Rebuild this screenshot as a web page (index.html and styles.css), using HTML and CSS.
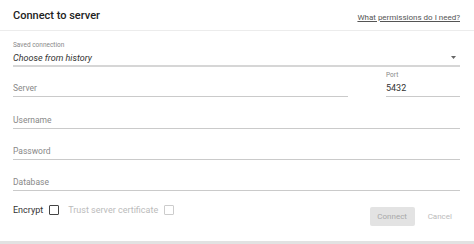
FILE: index.html
```html
<!DOCTYPE html>
<html lang="en">

<head>
    <meta charset="UTF-8">
    <meta name="viewport" content="width=device-width, initial-scale=1.0">
    <title>Connect to server</title>
    <link rel="stylesheet" href="styles.css">
</head>

<body>
    <div class="dialog">
        <div class="header">
            <h1 class="title">Connect to server</h1>
            <a class="help" href="#">What permissions do I need?</a>
        </div>
        <div class="content">
            <div class="select">
                <div class="label">Saved connection</div>
                <div class="value">
                    <span>Choose from history</span>
                    <svg class="arrow" width="5" height="3" viewBox="0 0 5 3"><path d="M0 0h5L2.5 3z" fill="#666"/></svg>
                </div>
            </div>
            <div class="row">
                <div class="field server"><span class="placeholder">Server</span></div>
                <div class="port">
                    <div class="label">Port</div>
                    <div class="field"><span class="text">5432</span></div>
                </div>
            </div>
            <div class="field gap first"><span class="placeholder">Username</span></div>
            <div class="field gap"><span class="placeholder">Password</span></div>
            <div class="field gap"><span class="placeholder">Database</span></div>
            <div class="footer">
                <div class="checks">
                    <span class="check-label">Encrypt</span>
                    <span class="box"></span>
                    <span class="check-label off">Trust server certificate</span>
                    <span class="box off"></span>
                </div>
                <div class="actions">
                    <button class="btn connect" disabled>Connect</button>
                    <button class="btn cancel">Cancel</button>
                </div>
            </div>
        </div>
    </div>
</body>

</html>
```

FILE: styles.css
```css
* {
    margin: 0;
    padding: 0;
    box-sizing: border-box;
    font-family: Roboto, "Liberation Sans", Arial, sans-serif;
}

body {
    background: #fff;
}

.dialog {
    width: 474px;
    height: 244px;
    border-bottom: 3px solid #e2e2e2;
}

.header {
    display: flex;
    align-items: center;
    justify-content: space-between;
    height: 31px;
    padding: 0 14px 0 13px;
    border-bottom: 1px solid #ececec;
}

.title {
    font-size: 11px;
    font-weight: 500;
    color: #222;
    padding-top: 1px;
}

.help {
    font-size: 8px;
    color: #555;
    text-decoration: underline;
    padding-top: 5px;
}

.content {
    padding: 0 14px 0 13px;
}

.select {
    padding-top: 10px;
    border-bottom: 2px solid #d6d6d6;
}

.label {
    font-size: 6.5px;
    line-height: 9px;
    color: #888;
}

.value {
    display: flex;
    align-items: center;
    justify-content: space-between;
    height: 15px;
    font-size: 9px;
    font-style: italic;
    color: #333;
    padding-right: 4px;
}

.row {
    display: flex;
    align-items: flex-end;
    gap: 38px;
    padding-top: 3px;
}

.server {
    flex: 1;
}

.port {
    width: 74px;
}

.port .label {
    line-height: 10px;
}

.field {
    height: 17px;
    line-height: 16px;
    font-size: 8.5px;
    border-bottom: 1px solid #cacaca;
}

.gap {
    margin-top: 14px;
}

.gap.first {
    margin-top: 15px;
}

.placeholder {
    color: #888;
}

.text {
    color: #333;
    font-size: 9px;
}

.footer {
    display: flex;
    justify-content: space-between;
    margin-top: 8px;
}

.checks {
    display: flex;
    align-items: center;
    height: 22px;
}

.check-label {
    font-size: 9px;
    color: #333;
}

.check-label.off {
    color: #bbb;
    margin-left: 9px;
}

.box {
    width: 10px;
    height: 10px;
    border: 1.5px solid #444;
    border-radius: 1px;
    margin-left: 6px;
}

.box.off {
    border: 1px solid #ccc;
}

.actions {
    display: flex;
    align-items: center;
    gap: 13px;
    margin-top: 8px;
    padding-right: 8px;
}

.btn {
    border: none;
    background: none;
    font-size: 8px;
    height: 19px;
    color: #bbb;
}

.connect {
    width: 45px;
    background: #e3e3e3;
    color: #a8a8a8;
    border-radius: 2px;
}
```
